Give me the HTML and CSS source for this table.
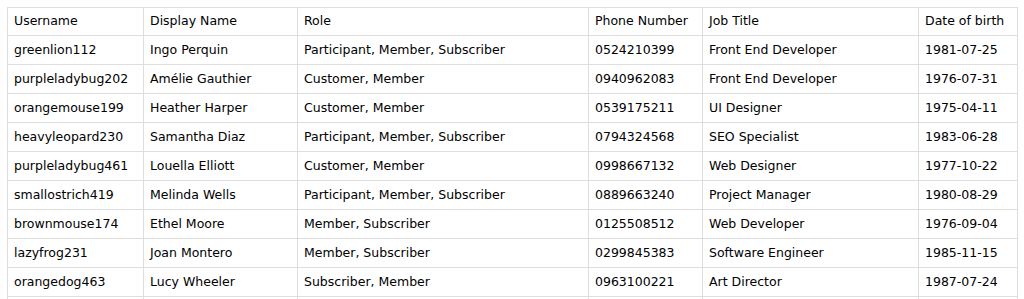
FILE: index.html
```html
<!DOCTYPE html>
<html>
<head>
<meta charset="utf-8">
<link rel="stylesheet" href="styles.css">
</head>
<body>
<table class="users">
  <colgroup>
    <col class="c-user"><col class="c-name"><col class="c-role"><col class="c-phone"><col class="c-job"><col class="c-dob">
  </colgroup>
  <thead>
    <tr><th>Username</th><th>Display Name</th><th>Role</th><th>Phone Number</th><th>Job Title</th><th>Date of birth</th></tr>
  </thead>
  <tbody>
    <tr><td>greenlion112</td><td>Ingo Perquin</td><td>Participant, Member, Subscriber</td><td>0524210399</td><td>Front End Developer</td><td>1981-07-25</td></tr>
    <tr><td>purpleladybug202</td><td>Amélie Gauthier</td><td>Customer, Member</td><td>0940962083</td><td>Front End Developer</td><td>1976-07-31</td></tr>
    <tr><td>orangemouse199</td><td>Heather Harper</td><td>Customer, Member</td><td>0539175211</td><td>UI Designer</td><td>1975-04-11</td></tr>
    <tr><td>heavyleopard230</td><td>Samantha Diaz</td><td>Participant, Member, Subscriber</td><td>0794324568</td><td>SEO Specialist</td><td>1983-06-28</td></tr>
    <tr><td>purpleladybug461</td><td>Louella Elliott</td><td>Customer, Member</td><td>0998667132</td><td>Web Designer</td><td>1977-10-22</td></tr>
    <tr><td>smallostrich419</td><td>Melinda Wells</td><td>Participant, Member, Subscriber</td><td>0889663240</td><td>Project Manager</td><td>1980-08-29</td></tr>
    <tr><td>brownmouse174</td><td>Ethel Moore</td><td>Member, Subscriber</td><td>0125508512</td><td>Web Developer</td><td>1976-09-04</td></tr>
    <tr><td>lazyfrog231</td><td>Joan Montero</td><td>Member, Subscriber</td><td>0299845383</td><td>Software Engineer</td><td>1985-11-15</td></tr>
    <tr><td>orangedog463</td><td>Lucy Wheeler</td><td>Subscriber, Member</td><td>0963100221</td><td>Art Director</td><td>1987-07-24</td></tr>
    <tr><td>&nbsp;</td><td>&nbsp;</td><td>&nbsp;</td><td>&nbsp;</td><td>&nbsp;</td><td>&nbsp;</td></tr>
  </tbody>
</table>
</body>
</html>
```

FILE: styles.css
```css
html, body {
  margin: 0;
  background: #ffffff;
}
body {
  padding: 7px 8px 0 7px;
  font-family: "DejaVu Sans", Verdana, sans-serif;
  font-size: 12.5px;
  color: #000000;
}
.users {
  border-collapse: collapse;
  table-layout: fixed;
  width: 1010px;
}
.c-user { width: 136px; }
.c-name { width: 154px; }
.c-role { width: 291px; }
.c-phone { width: 114px; }
.c-job { width: 216px; }
.c-dob { width: 99px; }
.users th,
.users td {
  border: 1px solid #dedede;
  padding: 6px 6px;
  line-height: 16px;
  text-align: left;
  font-weight: normal;
  white-space: nowrap;
  overflow: hidden;
}
.users thead th {
  padding: 5px 6px 6px;
}
```
